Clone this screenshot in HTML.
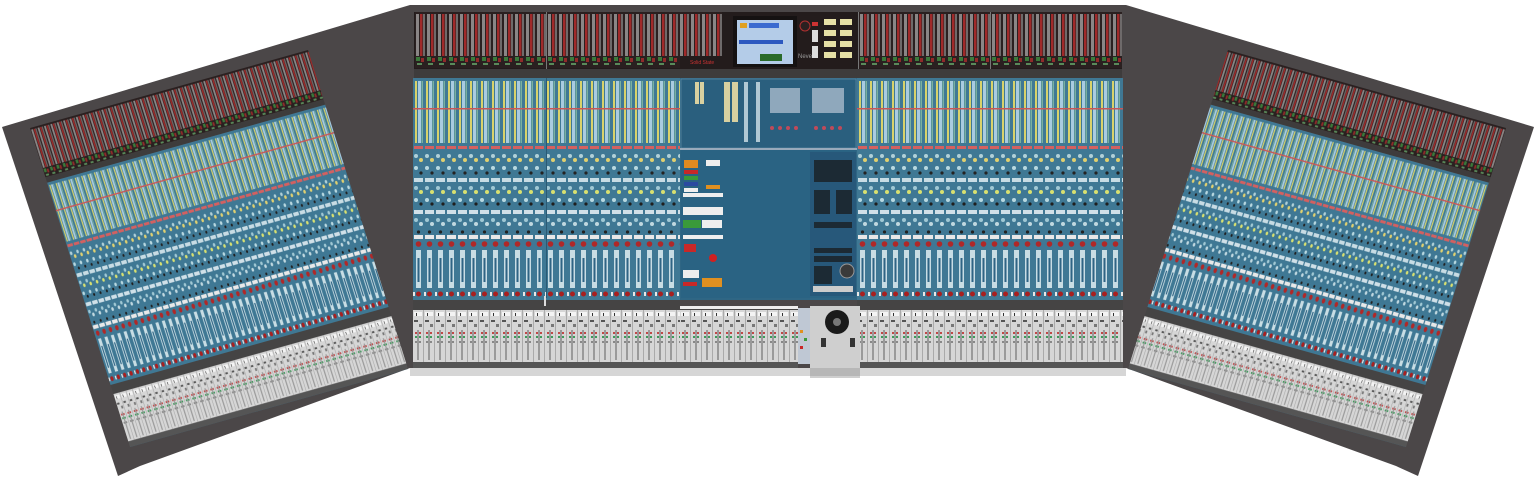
<!DOCTYPE html>
<html><head><meta charset="utf-8"><style>html,body{margin:0;padding:0;background:#fff;width:1536px;height:484px;overflow:hidden}</style></head>
<body>
<svg width="1536" height="484" viewBox="0 0 1536 484" xmlns="http://www.w3.org/2000/svg">
<defs>
<pattern id="mb" width="11" height="56" patternUnits="userSpaceOnUse">
 <rect width="11" height="56" fill="#2a2020"/>
 <rect x="1" y="2" width="3" height="42" fill="#8a8686"/>
 <rect x="5" y="2" width="2.5" height="42" fill="#a02a2a"/>
 <rect x="8" y="2" width="2" height="42" fill="#6e6a6a"/>
 <rect x="1" y="45" width="4" height="4" fill="#3a7a3a"/>
 <rect x="6" y="46" width="3" height="4" fill="#902a2a"/>
 <rect x="2" y="51" width="5" height="2" fill="#5a8a5a"/>
</pattern>
<pattern id="ch" width="11" height="290" patternUnits="userSpaceOnUse">
 <rect width="11" height="222" fill="#3f7894"/>
 <rect x="2" y="3" width="2" height="62" fill="#d8d26a"/>
 <rect x="5" y="3" width="3" height="62" fill="#a8cbe0"/>
 <rect x="8.5" y="3" width="1.5" height="62" fill="#7ab0a0"/>
 <rect x="0" y="30" width="11" height="1.5" fill="#c85858"/>
 <rect x="1" y="68" width="9" height="3" fill="#d46060"/>
 <circle cx="3" cy="78" r="2" fill="#b0d0d8"/><circle cx="8" cy="82" r="2" fill="#e0d070"/>
 <circle cx="3" cy="90" r="2" fill="#b8d8e0"/><circle cx="8" cy="95" r="1.6" fill="#222"/>
 <rect x="1" y="100" width="9" height="4" fill="#c8dce4"/>
 <circle cx="3" cy="110" r="2" fill="#a0c8d4"/><circle cx="8" cy="114" r="2" fill="#d8e070"/>
 <circle cx="3" cy="122" r="2" fill="#b8d8e0"/><circle cx="8" cy="126" r="1.6" fill="#1e1e1e"/>
 <rect x="1" y="132" width="9" height="4" fill="#d0e0e8"/>
 <circle cx="3" cy="142" r="2" fill="#a0c8d4"/><circle cx="8" cy="146" r="2" fill="#c0d8e0"/>
 <circle cx="5.5" cy="154" r="1.6" fill="#222"/>
 <rect x="1" y="157" width="9" height="4" fill="#e8e8e8"/>
 <circle cx="5.5" cy="166" r="2.8" fill="#b02828"/>
 <rect x="3" y="172" width="5" height="38" fill="#c8dde4"/>
 <rect x="4.5" y="180" width="2" height="24" fill="#2e6484"/>
 <circle cx="5.5" cy="216" r="2.5" fill="#a82020"/>
 <rect x="0" y="214" width="2" height="4" fill="#e8e8e8"/>
 <rect y="222" width="11" height="10" fill="#454444"/>
 <rect y="232" width="11" height="52" fill="#d6d6d6"/>
 <rect x="1" y="234" width="8" height="4" fill="#f4f4f4"/>
 <rect x="3" y="235" width="1" height="3" fill="#333"/>
 <rect x="1" y="242" width="4" height="2" fill="#555"/>
 <rect x="6" y="246" width="3" height="3" fill="#777"/>
 <rect x="2" y="254" width="6" height="2" fill="#c04848"/>
 <rect x="2" y="258" width="6" height="2" fill="#3c9a5a"/>
 <rect x="2" y="263" width="6" height="2" fill="#888"/>
 <rect x="4" y="252" width="2" height="30" fill="#9a9a9a"/>
 <rect x="10" y="232" width="1" height="52" fill="#aaa"/>
 <rect y="284" width="11" height="6" fill="#555"/>
</pattern>
<g id="wing">
 <rect width="480" height="54" fill="url(#mb)"/>
 <rect y="54" width="480" height="6" fill="#3e3c3c"/>
 <g transform="translate(0,60)"><rect width="480" height="290" fill="url(#ch)"/></g>
</g>
</defs>

<polygon points="2,127 410,5 410,368 140,466 118,476" fill="#4b4748"/>
<polygon points="1534,127 1126,5 1126,368 1396,466 1418,476" fill="#4b4748"/>
<g transform="matrix(0.5792,-0.1625,0.2857,0.9114,30,128)"><use href="#wing"/></g>
<g transform="translate(1536,0) scale(-1,1)"><g transform="matrix(0.5792,-0.1625,0.2857,0.9114,30,128)"><use href="#wing"/></g></g>

<rect x="410" y="5" width="716" height="363" fill="#4b4748"/>
<rect x="414" y="12" width="708" height="57" fill="#231c1c"/>
<g transform="translate(415,12)"><rect width="307" height="56" fill="url(#mb)"/></g>
<g transform="translate(859,12)"><rect width="263" height="56" fill="url(#mb)"/></g>
<rect x="546" y="12" width="1" height="57" fill="#777"/>
<rect x="990" y="12" width="1" height="57" fill="#777"/>
<rect x="858" y="12" width="1" height="57" fill="#777"/>
<rect x="680" y="56" width="50" height="12" fill="#231c1c"/>
<text x="690" y="64" font-family="Liberation Sans,sans-serif" font-size="5" fill="#c33">Solid State</text>
<rect x="733" y="16" width="64" height="51" fill="#151212"/>
<rect x="737" y="20" width="56" height="44" fill="#b4cce8"/>
<rect x="740" y="23" width="7" height="5" fill="#e0a020"/>
<rect x="749" y="23" width="30" height="5" fill="#3a6ad0"/>
<rect x="739" y="40" width="44" height="4" fill="#2c58c0"/>
<rect x="760" y="54" width="22" height="7" fill="#2a6a2a"/>
<circle cx="805" cy="26" r="5" fill="#2a2020" stroke="#b03030"/>
<text x="798" y="58" font-family="Liberation Sans,sans-serif" font-size="6" fill="#999">Neve</text>
<rect x="812" y="22" width="6" height="4" fill="#c33"/>
<rect x="812" y="30" width="6" height="12" fill="#ddd"/><rect x="812" y="46" width="6" height="12" fill="#ddd"/>
<rect x="824" y="19" width="12" height="6" fill="#e6e0a6"/><rect x="840" y="19" width="12" height="6" fill="#e6e0a6"/>
<rect x="824" y="30" width="12" height="6" fill="#e6e0a6"/><rect x="840" y="30" width="12" height="6" fill="#e6e0a6"/>
<rect x="824" y="41" width="12" height="6" fill="#e6e0a6"/><rect x="840" y="41" width="12" height="6" fill="#e6e0a6"/>
<rect x="824" y="52" width="12" height="6" fill="#e6e0a6"/><rect x="840" y="52" width="12" height="6" fill="#e6e0a6"/>
<rect x="414" y="69" width="708" height="9" fill="#3e3c3c"/>

<g transform="translate(413,78)"><rect width="267" height="290" fill="url(#ch)"/></g>
<g transform="translate(857,78)"><rect width="266" height="290" fill="url(#ch)"/></g>
<g transform="translate(680,78)"><rect y="228" width="118" height="62" fill="url(#ch)"/></g>
<rect x="546" y="78" width="1" height="220" fill="#2a5a74"/>
<rect x="544" y="296" width="2" height="10" fill="#ddd"/>

<rect x="680" y="78" width="177" height="222" fill="#2f6684"/>
<rect x="681" y="79" width="175" height="69" fill="#2a5f7e" stroke="#5d8aa4" stroke-width="0.7"/>
<rect x="695" y="82" width="4" height="22" fill="#d8d0a0"/><rect x="700" y="82" width="4" height="22" fill="#d8d0a0"/>
<rect x="724" y="82" width="6" height="40" fill="#d8d0a0"/><rect x="732" y="82" width="6" height="40" fill="#d8d0a0"/>
<rect x="744" y="82" width="4" height="60" fill="#b0c8d4"/><rect x="756" y="82" width="4" height="60" fill="#b0c8d4"/>
<rect x="770" y="88" width="30" height="25" fill="#8fa8bc"/>
<rect x="812" y="88" width="32" height="25" fill="#8fa8bc"/>
<g fill="#c04a5a"><circle cx="772" cy="128" r="2"/><circle cx="780" cy="128" r="2"/><circle cx="788" cy="128" r="2"/><circle cx="796" cy="128" r="2"/><circle cx="816" cy="128" r="2"/><circle cx="824" cy="128" r="2"/><circle cx="832" cy="128" r="2"/><circle cx="840" cy="128" r="2"/></g>
<rect x="680" y="148" width="177" height="2" fill="#9ab"/>
<rect x="681" y="150" width="175" height="148" fill="#2a6383"/>
<rect x="810" y="152" width="46" height="144" fill="#27587a"/>
<rect x="814" y="160" width="38" height="22" fill="#1c2a34"/>
<rect x="814" y="190" width="16" height="24" fill="#1c2a34"/>
<rect x="836" y="190" width="16" height="24" fill="#1c2a34"/>
<rect x="814" y="222" width="38" height="6" fill="#1c2a34"/>
<rect x="814" y="248" width="38" height="5" fill="#1c2a34"/>
<rect x="814" y="256" width="38" height="6" fill="#1c2a34"/>
<rect x="814" y="266" width="18" height="18" fill="#1c2a34"/>
<circle cx="847" cy="271" r="7" fill="#3a3a3a" stroke="#999"/>
<rect x="813" y="286" width="40" height="6" fill="#ccc"/>
<rect x="684" y="160" width="14" height="8" fill="#e08a20"/>
<rect x="684" y="170" width="14" height="4" fill="#c82828"/>
<rect x="684" y="176" width="14" height="4" fill="#3a9a3a"/>
<rect x="684" y="182" width="14" height="4" fill="#2a4aa0"/>
<rect x="684" y="188" width="14" height="4" fill="#eee"/>
<rect x="706" y="160" width="14" height="6" fill="#eee"/>
<rect x="706" y="185" width="14" height="4" fill="#e09020"/>
<rect x="683" y="193" width="40" height="4" fill="#eee"/>
<rect x="683" y="207" width="40" height="8" fill="#eee"/>
<rect x="683" y="220" width="18" height="8" fill="#3a9a3a"/>
<rect x="702" y="220" width="20" height="8" fill="#eee"/>
<rect x="683" y="235" width="40" height="4" fill="#eee"/>
<rect x="684" y="244" width="12" height="8" fill="#c82828"/>
<circle cx="713" cy="258" r="4" fill="#d02020"/>
<rect x="683" y="270" width="16" height="8" fill="#eee"/>
<rect x="683" y="282" width="14" height="4" fill="#c82828"/>
<rect x="702" y="278" width="20" height="9" fill="#e09020"/>

<rect x="810" y="306" width="50" height="72" fill="#cfcfcf"/>
<rect x="798" y="308" width="12" height="56" fill="#bfc8d4"/>
<g fill="#e09020"><rect x="800" y="330" width="3" height="3"/></g>
<g fill="#3a9a3a"><rect x="804" y="338" width="3" height="3"/></g>
<g fill="#c82828"><rect x="800" y="346" width="3" height="3"/></g>
<circle cx="837" cy="322" r="12" fill="#1a1a1a"/>
<circle cx="837" cy="322" r="4" fill="#777"/>
<rect x="821" y="338" width="5" height="9" fill="#333"/>
<rect x="850" y="338" width="5" height="9" fill="#333"/>
<rect x="680" y="306" width="118" height="3" fill="#eee"/>

<rect x="410" y="368" width="716" height="8" fill="#8a8a8a" opacity="0.35"/>
</svg>
</body></html>
